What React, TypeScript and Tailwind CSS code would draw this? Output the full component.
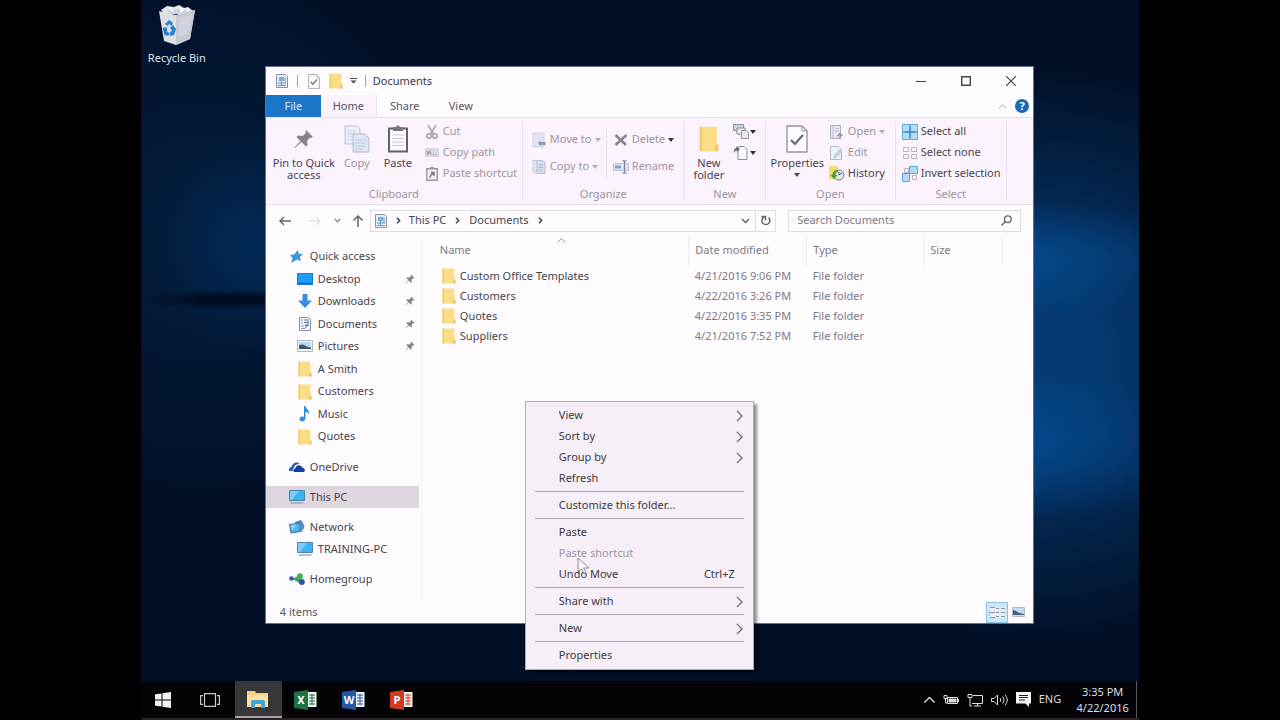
import { useState, type ReactNode } from 'react'
import clsx from 'clsx'

type IconProps = { className?: string }

const FolderIcon = ({ className = 'w-[14px] h-4' }: IconProps) => (
  <svg className={className} viewBox="0 0 14 16" preserveAspectRatio="none" aria-hidden="true">
    <path d="M.5.5h12v10.500l1 1v3.500H.5z" fill="#fbdd88" />
    <path d="M.5.5H2v15H.5z" fill="#f0cb6a" />
    <path d="M11 11.500h2.500v4H11z" fill="#f0ca68" />
  </svg>
)

const DocIcon = ({ className = 'w-[14px] h-4' }: IconProps) => (
  <svg className={className} viewBox="0 0 14 16" fill="none" aria-hidden="true">
    <path d="M1.500 1.500h9l2 2v11h-11z" fill="#f3f6fb" stroke="#8d90a4" />
    <path d="M3 4h2M3 7h2M3 10h3M3 12.500h4" stroke="#8a94b0" />
    <path d="M6 4h5M6 6.500h4M10 5v5M7 9.500h4M8 8v4" stroke="#5b77a6" />
  </svg>
)

const BlueDocIcon = ({ className = 'w-[14px] h-4' }: IconProps) => (
  <svg className={className} viewBox="0 0 14 16" fill="none" aria-hidden="true">
    <path d="M1.500 1.500h9l2 2v11h-11z" fill="#e2edf8" stroke="#8d93a8" />
    <path d="M4 4h5v4H4z" fill="#7cb1e3" />
    <path d="M3 10h8M3 12.500h8M10 4.500v5M6.500 8v4" stroke="#6f93bd" />
  </svg>
)

const CheckDocIcon = ({ className = 'w-3 h-[15px]' }: IconProps) => (
  <svg className={className} viewBox="0 0 22 28" fill="none" aria-hidden="true">
    <path d="M1 1h15l5 5v21H1z" fill="#fdfbfe" stroke="#9a94a0" strokeWidth="1.4" />
    <path d="M16 1v5h5" stroke="#9a94a0" />
    <path d="M5 15l4 4 8-9" stroke="#6c6872" strokeWidth="2.2" />
  </svg>
)

const PinIcon = ({ className = 'w-[10px] h-[10px]' }: IconProps) => (
  <svg className={className} viewBox="0 0 20 20" aria-hidden="true">
    <path d="M12 1l7 7-2 1-1-.5-3 3.500.5 4-1.500 1.500-4.500-4.500L1 19l-.5-.5L6.500 12 2.500 8 4 6.500l4.500.5L12 4l-.5-1z" fill="#85838b" />
  </svg>
)

const StarIcon = () => (
  <svg className="w-[13px] h-[13px]" viewBox="0 0 12 12" aria-hidden="true">
    <path d="M7 0l1.200 3.400 3.800.4-2.800 2.500.7 4.200-3.300-1.700L1 12l1.400-4.700L0 4.500l4.200-.6z" fill="#3d95dc" />
  </svg>
)

const DesktopIcon = () => (
  <svg className="w-4 h-3" viewBox="0 0 16 12" aria-hidden="true">
    <path d="M0 0h16v12H0z" fill="#1a7fd4" />
    <path d="M1 1h14v8.500H1z" fill="#1e9cf5" />
    <path d="M2 10.500h12" stroke="#0d5fa8" />
  </svg>
)

const DownloadIcon = () => (
  <svg className="w-[14px] h-[14px]" viewBox="0 0 14 14" aria-hidden="true">
    <path d="M4.500 0h5v6.500H14L7 14 0 6.500h4.500z" fill="#3c8ddb" />
  </svg>
)

const PicturesIcon = () => (
  <svg className="w-4 h-3" viewBox="0 0 16 12" aria-hidden="true">
    <path d="M.5.5h15v11H.5z" fill="#eef3f8" stroke="#b3b7c2" />
    <path d="M2 2h12v7H2z" fill="#bcd6ec" />
    <path d="M2 5l4-.5 5 2.500 3 .5V9H2z" fill="#46566a" />
  </svg>
)

const MusicIcon = () => (
  <svg className="w-[14px] h-4" viewBox="0 0 14 16" aria-hidden="true">
    <path d="M6 0h1.500c0 3 4.500 4 3.500 8.500-.5-2-2-2.500-3.500-2.800V12c0 4.500-6 4.500-6 1 0-2 2.500-3 4.500-2z" fill="#2f8ddc" />
  </svg>
)

const OneDriveIcon = () => (
  <svg className="w-4 h-[10px]" viewBox="0 0 16 10" aria-hidden="true">
    <path d="M0 9c-.5-3 1.500-4 2.500-4C3 1 8-1 10.500 2 7 1.500 5 4 5 6 4 6 3.500 8 4 9z" fill="#2a5bb0" />
    <path d="M4.800 10C3.500 7 6 6 6.500 6.200 7 2.500 12 2 13 5.500c3 0 3.500 3.500 2 4.500z" fill="#123f95" />
  </svg>
)

const ComputerIcon = () => (
  <svg className="w-4 h-[14px]" viewBox="0 0 16 14" aria-hidden="true">
    <path d="M.5.5h15v10H.5z" fill="#3db2f2" stroke="#4a86b4" />
    <path d="M1 1h9L3 10H1z" fill="#7acdf8" />
    <path d="M1.500 13h13" stroke="#a3a8b8" strokeWidth="1.5" />
  </svg>
)

const NetworkIcon = () => (
  <svg className="w-4 h-[14px]" viewBox="0 0 16 14" aria-hidden="true">
    <path d="M6 2l6-2 3.500 6-3 6-5-1z" fill="#4083b4" />
    <path d="M10 1.500c4 0 5.500 3 5 6s-3 4.500-4 4.500z" fill="#5e93bb" />
    <path d="M.5 4.500L11 3v8.500L2 13z" fill="#4db4ea" stroke="#3879a8" />
    <path d="M1.500 5.200L8 4.300 3 11z" fill="#88d0f5" />
  </svg>
)

const HomegroupIcon = () => (
  <svg className="w-4 h-3" viewBox="0 0 16 12" aria-hidden="true">
    <path d="M3 6l8-4v8z" fill="#3fa060" />
    <circle cx="2.5" cy="5.5" r="2.3" fill="#2f62a8" />
    <circle cx="11" cy="3.2" r="3" fill="#4aae58" />
    <circle cx="12.8" cy="9" r="3" fill="#29579c" />
  </svg>
)

const Caret = ({ className = 'text-[#2f2d33]' }: IconProps) => (
  <svg className={clsx('w-[6px] h-[4px] shrink-0', className)} viewBox="0 0 6 4" aria-hidden="true">
    <path d="M0 0h6L3 4z" fill="currentColor" />
  </svg>
)

const Chevron = ({ className }: IconProps) => (
  <svg className={clsx('shrink-0', className)} viewBox="0 0 8 14" fill="none" aria-hidden="true">
    <path d="M1 1l6 6-6 6" stroke="currentColor" strokeWidth="1.5" />
  </svg>
)

// Bolder and smaller, for the breadcrumb and the history drop-downs
const Angle = ({ className }: IconProps) => (
  <svg className={clsx('w-[5px] h-[7px] shrink-0', className)} viewBox="0 0 5 7" fill="none" aria-hidden="true">
    <path d="M1 .8l2.700 2.700L1 6.200" stroke="currentColor" strokeWidth="1.5" />
  </svg>
)

const CopyIcon = () => (
  <svg className="w-[26px] h-7" viewBox="0 0 26 28" aria-hidden="true">
    <path d="M1 1h12l3 3v15H1z" fill="#e9edf7" stroke="#bcc1d2" />
    <path d="M3 6h9M3 9h9M3 12h9M3 15h6" stroke="#cdd5e6" />
    <path d="M9 9h12l4 4v14H9z" fill="#dde5f3" stroke="#b3bacd" />
    <path d="M11 15h11M11 18h11M11 21h11M11 24h8" stroke="#bccbe2" />
  </svg>
)

const PasteIcon = () => (
  <svg className="w-[22px] h-7" viewBox="0 0 22 28" aria-hidden="true">
    <path d="M2 3.500h18v23H2z" fill="#fbfbff" stroke="#626069" strokeWidth="2" />
    <path d="M6 2h3l2-2 2 2h3v4H6z" fill="#77757e" />
    <path d="M5 10h12M5 13.500h12M5 17h12M5 20.500h12" stroke="#c3cce0" />
  </svg>
)

const CutIcon = () => (
  <svg className="w-3 h-[14px]" viewBox="0 0 12 14" fill="none" stroke="#a29eaa" strokeWidth="1.5" aria-hidden="true">
    <path d="M2 0l5.500 9M10 0L4.500 9" />
    <circle cx="3" cy="11" r="2.2" />
    <circle cx="9" cy="11" r="2.2" />
  </svg>
)

const CopyPathIcon = () => (
  <svg className="w-[14px] h-[10px]" viewBox="0 0 14 10" aria-hidden="true">
    <path d="M0 0h14v9H0z" fill="#d6d8e4" />
    <path d="M1.500 3l1.500 3.500L4.500 3 6 6.500M8 6.500h1M10.500 6.500h1" stroke="#8b8c9e" fill="none" />
  </svg>
)

const PasteShortcutIcon = () => (
  <svg className="w-3 h-[14px]" viewBox="0 0 12 14" fill="none" aria-hidden="true">
    <path d="M.8 1.800h10.400v11.400H.8z" fill="#f4f3fa" stroke="#9694a0" strokeWidth="1.4" />
    <path d="M4 1h4" stroke="#9694a0" strokeWidth="2" />
    <path d="M4 11c0-3 1-4 3.500-4M5 5.500h3v3.500" stroke="#73717e" strokeWidth="1.3" />
  </svg>
)

const MoveToIcon = () => (
  <svg className="w-[14px] h-4" viewBox="0 0 14 16" aria-hidden="true">
    <path d="M1 1h11v14H1z" fill="#dde3f1" stroke="#cfd6e6" />
    <path d="M6 11l2.500-2.500v1.500h5v3h-5v1.500z" fill="#8f9bb6" />
  </svg>
)

const CopyToIcon = () => (
  <svg className="w-[14px] h-4" viewBox="0 0 14 16" aria-hidden="true">
    <path d="M1 1.500h6v12H1z" fill="#e0e4f0" stroke="#c5cbdc" />
    <path d="M5 1.500h6l2 2v11H5z" fill="#d5deee" stroke="#b5bed4" />
    <path d="M7 6h4M7 8.500h4M7 11h3" stroke="#a9b6d0" />
  </svg>
)

const DeleteIcon = () => (
  <svg className="w-[14px] h-3" viewBox="0 0 14 12" fill="none" aria-hidden="true">
    <path d="M1.500 1L12 11M12.500 1L1.500 11" stroke="#87848e" strokeWidth="2.6" />
  </svg>
)

const RenameIcon = () => (
  <svg className="w-4 h-[14px]" viewBox="0 0 16 14" fill="none" aria-hidden="true">
    <path d="M.5 3.500h15v7H.5z" fill="#dfe3ef" stroke="#bdc2d2" />
    <path d="M2 5.500h6v3H2z" fill="#8fa2c6" />
    <path d="M9.500.7c1.500 0 2 .3 2 1.300v10c0 1-.5 1.300-2 1.300M13.500.7c-1.500 0-2 .3-2 1.300M13.500 13.300c-1.500 0-2-.3-2-1.300" stroke="#86848f" strokeWidth="1.2" />
  </svg>
)

const NewItemIcon = () => (
  <svg className="w-4 h-[15px]" viewBox="0 0 16 15" aria-hidden="true">
    <path d="M.6.6h10v6H.6z" fill="#cfd9e6" stroke="#858b96" />
    <path d="M4 4h8v6H4z" fill="#e9edf4" stroke="#858b96" />
    <path d="M8.500 6.500h5l2 2v6h-7z" fill="#e3e8f2" stroke="#93979f" />
  </svg>
)

const EasyAccessIcon = () => (
  <svg className="w-4 h-[15px]" viewBox="0 0 16 15" fill="none" aria-hidden="true">
    <path d="M5 1.500h6l3 3v10H5z" fill="#fbf9fe" stroke="#8f8c96" />
    <path d="M.5 8l1-4 1.500-1V1.500L7 4 4 7V5.500L2.500 6z" fill="#6a6872" />
  </svg>
)

const OpenIcon = () => (
  <svg className="w-[13px] h-[14px]" viewBox="0 0 13 14" fill="none" aria-hidden="true">
    <path d="M.5.5h10v13H.5z" fill="#e6e8f1" stroke="#a9aec0" />
    <path d="M3 1v12M5 3.500h4M5 6h4" stroke="#b6bccd" />
    <path d="M10 14V9M7.500 11l2.500-2.500L12.500 11" stroke="#8f94a8" strokeWidth="1.4" />
  </svg>
)

const EditIcon = () => (
  <svg className="w-[13px] h-[14px]" viewBox="0 0 13 14" aria-hidden="true">
    <path d="M.5.5h8l3 3v10H.5z" fill="#eef1f8" stroke="#b2b8c8" />
    <path d="M3 13l1-4 6-6 2.500 2.500-6 6z" fill="#c3cfe4" />
  </svg>
)

const HistoryIcon = () => (
  <svg className="w-4 h-[15px]" viewBox="0 0 16 15" aria-hidden="true">
    <path d="M0 0h9v13H0z" fill="#f6da6c" />
    <circle cx="10" cy="9" r="5" fill="#e3ebe6" stroke="#71808c" />
    <path d="M10 6v3l3-2" stroke="#4e5a60" fill="none" />
    <path d="M9 4C5 4 3 7 3.500 9H1.500L5 13l3.500-4h-2C6.300 7 7.500 6 9 6z" fill="#3f9d3c" />
  </svg>
)

const SelectAllIcon = () => (
  <svg className="w-4 h-4" viewBox="0 0 16 16" aria-hidden="true">
    <path d="M0 0h16v16H0z" fill="#62b0e6" />
    <path d="M1 1h6v6H1zM9 1h6v6H9zM1 9h6v6H1zM9 9h6v6H9z" fill="#b4dcf6" />
    <path d="M8 3v10M3 8h10" stroke="#3886c2" />
  </svg>
)

const SelectNoneIcon = () => (
  <svg className="w-4 h-4" viewBox="0 0 16 16" aria-hidden="true">
    <path d="M1.500 2.500h5v4h-5zM9.500 2.500h5v4h-5zM1.500 9.500h5v4h-5zM9.500 9.500h5v4h-5z" fill="none" stroke="#b9b4c0" />
  </svg>
)

const InvertIcon = () => (
  <svg className="w-4 h-4" viewBox="0 0 16 16" aria-hidden="true">
    <path d="M2.500 2.500h4v4h-4zM10.500 9.500h4v4h-4z" fill="none" stroke="#b9b4c0" />
    <path d="M7.500.5h8v7h-8zM.5 7.500h7v8h-7z" fill="#b4dbf6" stroke="#5ba3d8" />
  </svg>
)

type RibbonItemProps = {
  icon: ReactNode
  label: string
  disabled?: boolean
  caret?: 'dark' | 'light'
}

const RibbonItem = ({ icon, label, disabled, caret }: RibbonItemProps) => (
  <button
    disabled={disabled}
    className={clsx(
      'flex items-center gap-[3px] h-[21px] whitespace-nowrap',
      disabled ? 'text-[#9a95a0]' : 'text-[#47444c]',
    )}
  >
    <span className="w-4 flex justify-center shrink-0">{icon}</span>
    {label}
    {caret && <Caret className={caret === 'dark' ? 'text-[#2f2d33]' : 'text-[#b3aeb8]'} />}
  </button>
)

const BigButton = ({
  icon,
  label,
  disabled,
  caret,
  className,
}: RibbonItemProps & { className: string }) => (
  <button
    disabled={disabled}
    className={clsx(
      'flex flex-col items-center shrink-0 leading-3 text-center',
      disabled ? 'text-[#9a95a0]' : 'text-[#47444c]',
      className,
    )}
  >
    <span className="h-9 flex items-center">{icon}</span>
    {label}
    {caret && <Caret className="mt-1" />}
  </button>
)

const RibbonGroup = ({
  label,
  className,
  children,
}: {
  label: string
  className: string
  children: ReactNode
}) => (
  <section
    aria-label={label}
    className={clsx('flex flex-col shrink-0 mt-[3px] mb-1 border-r border-[#ebe1ee]', className)}
  >
    <div className="flex h-[68px]">{children}</div>
    <div className="text-center text-[#9a95a0] leading-3">{label}</div>
  </section>
)

const Ribbon = () => (
  <div className="flex h-[88px] bg-[#fbf3fd] border-y border-[#eadfec]">
    <RibbonGroup label="Clipboard" className="w-[257px]">
      <BigButton className="w-[76px] px-1" icon={<PinIcon className="w-5 h-5" />} label="Pin to Quick access" />
      <BigButton className="w-[30px]" icon={<CopyIcon />} label="Copy" disabled />
      <BigButton className="w-[52px]" icon={<PasteIcon />} label="Paste" />
      <div className="flex flex-col">
        <RibbonItem icon={<CutIcon />} label="Cut" disabled />
        <RibbonItem icon={<CopyPathIcon />} label="Copy path" disabled />
        <RibbonItem icon={<PasteShortcutIcon />} label="Paste shortcut" disabled />
      </div>
    </RibbonGroup>
    <RibbonGroup label="Organize" className="w-[162px]">
      <div className="flex pt-2">
        <div className="flex flex-col gap-[6px] pl-2 w-[84px] h-[50px] border-r border-[#ebe1ee]">
          <RibbonItem icon={<MoveToIcon />} label="Move to" disabled caret="light" />
          <RibbonItem icon={<CopyToIcon />} label="Copy to" disabled caret="light" />
        </div>
        <div className="flex flex-col gap-[6px] pl-[6px]">
          <RibbonItem icon={<DeleteIcon />} label="Delete" disabled caret="dark" />
          <RibbonItem icon={<RenameIcon />} label="Rename" disabled />
        </div>
      </div>
    </RibbonGroup>
    <RibbonGroup label="New" className="w-[81px]">
      <BigButton className="w-12 px-1" icon={<FolderIcon className="w-5 h-[26px]" />} label="New folder" />
      <div className="flex flex-col">
        <button aria-label="New item" className="flex items-center gap-px h-[21px]">
          <NewItemIcon />
          <Caret />
        </button>
        <button aria-label="Easy access" className="flex items-center gap-px h-[21px]">
          <EasyAccessIcon />
          <Caret />
        </button>
      </div>
    </RibbonGroup>
    <RibbonGroup label="Open" className="w-[130px]">
      <BigButton className="w-[63px]" icon={<CheckDocIcon className="w-[22px] h-7" />} label="Properties" caret="dark" />
      <div className="flex flex-col">
        <RibbonItem icon={<OpenIcon />} label="Open" disabled caret="light" />
        <RibbonItem icon={<EditIcon />} label="Edit" disabled />
        <RibbonItem icon={<HistoryIcon />} label="History" />
      </div>
    </RibbonGroup>
    <RibbonGroup label="Select" className="w-[111px]">
      <div className="flex flex-col pl-[6px]">
        <RibbonItem icon={<SelectAllIcon />} label="Select all" />
        <RibbonItem icon={<SelectNoneIcon />} label="Select none" />
        <RibbonItem icon={<InvertIcon />} label="Invert selection" />
      </div>
    </RibbonGroup>
  </div>
)

const TitleBar = () => (
  <header className="flex items-center h-7 pl-[9px] text-[#3a383f]">
    <BlueDocIcon />
    <span className="w-px h-3 ml-2 bg-[#a5a1ab]" />
    <button aria-label="Properties" className="ml-[10px]">
      <CheckDocIcon />
    </button>
    <button aria-label="New folder" className="ml-[9px]">
      <FolderIcon />
    </button>
    <button aria-label="Customize toolbar" className="ml-[7px]">
      <svg className="w-[7px] h-[6px]" viewBox="0 0 7 6" aria-hidden="true">
        <path d="M0 0h7v1H0zM.5 2.500h6l-3 3z" fill="#4a484f" />
      </svg>
    </button>
    <span className="w-px h-3 ml-2 bg-[#a5a1ab]" />
    <h1 className="ml-[7px]">Documents</h1>
    <div className="flex ml-auto">
      <button aria-label="Minimize" className="w-[45px] flex justify-center">
        <svg className="w-[10px] h-[10px]" viewBox="0 0 10 10" aria-hidden="true">
          <path d="M0 5.500h10" stroke="#444" />
        </svg>
      </button>
      <button aria-label="Maximize" className="w-[45px] flex justify-center">
        <svg className="w-[10px] h-[10px]" viewBox="0 0 10 10" aria-hidden="true">
          <path d="M.7.7h8.600v8.600H.7z" fill="none" stroke="#444" strokeWidth="1.4" />
        </svg>
      </button>
      <button aria-label="Close" className="w-[45px] flex justify-center">
        <svg className="w-[10px] h-[10px]" viewBox="0 0 10 10" aria-hidden="true">
          <path d="M0 0l10 10M10 0L0 10" stroke="#444" strokeWidth="1.2" />
        </svg>
      </button>
    </div>
  </header>
)

const tabs = ['Home', 'Share', 'View']

const TabBar = () => {
  const [selectedTab, setSelectedTab] = useState('Home')

  return (
    <div className="flex h-[22px] text-[#57545c]">
      <button className="w-[55px] pt-px bg-[#1b75c8] text-[#dcecfa]">File</button>
      {tabs.map((tab) => (
        <button
          key={tab}
          onClick={() => setSelectedTab(tab)}
          className={clsx(
            'w-14 pt-px',
            selectedTab === tab && '-mb-px pb-px bg-[#fbf3fd] border-r border-[#eadfec]',
          )}
        >
          {tab}
        </button>
      ))}
      <div className="flex items-center gap-[10px] ml-auto pr-1">
        <button aria-label="Collapse ribbon">
          <Chevron className="w-[5px] h-[9px] -rotate-90 text-[#a5a1ab]" />
        </button>
        <button
          aria-label="Help"
          className="w-[14px] h-[14px] rounded-full bg-[#1769b8] leading-3 font-bold text-white"
        >
          ?
        </button>
      </div>
    </div>
  )
}

const AddressBar = () => (
  <nav aria-label="Address" className="flex items-center h-[31px] text-[#47444c]">
    <button aria-label="Back" className="ml-[13px]">
      <svg className="w-3 h-[10px]" viewBox="0 0 12 10" fill="none" stroke="#66636b" strokeWidth="1.5">
        <path d="M12 5H1M5 1L1 5l4 4" />
      </svg>
    </button>
    <button aria-label="Forward" className="ml-[18px]" disabled>
      <svg className="w-3 h-[10px]" viewBox="0 0 12 10" fill="none" stroke="#e2dee6" strokeWidth="1.5">
        <path d="M0 5h11M7 1l4 4-4 4" />
      </svg>
    </button>
    <button aria-label="Recent locations" className="ml-[14px]">
      <Angle className="rotate-90 text-[#8d8993]" />
    </button>
    <button aria-label="Up" className="ml-3">
      <svg className="w-3 h-3" viewBox="0 0 12 12" fill="none" stroke="#66636b" strokeWidth="1.5">
        <path d="M6 12V1M1.500 5.500L6 1l4.500 4.500" />
      </svg>
    </button>
    <div className="flex items-center grow h-[22px] ml-[6px] pl-[3px] border border-[#e2dbe5]">
      <BlueDocIcon />
      <Angle className="mx-2" />
      <a href="#this-pc">This PC</a>
      <Angle className="mx-[9px]" />
      <a href="#documents">Documents</a>
      <Angle className="mx-[9px]" />
      <button aria-label="Previous locations" className="ml-auto mr-[5px]">
        <svg className="w-[9px] h-[6px]" viewBox="0 0 9 6" fill="none" stroke="#66636b" strokeWidth="1.5">
          <path d="M1 1l3.500 3.500L8 1" />
        </svg>
      </button>
      <button
        aria-label="Refresh"
        className="flex items-center justify-center w-5 h-5 border-l border-[#e2dbe5]"
      >
        <svg className="w-[10px] h-[11px]" viewBox="0 0 10 11" fill="none" stroke="#66636b" strokeWidth="1.5">
          <path d="M7.500 2.500a4 4 0 1 1-4.500-.5M.5 1.500h4v4" />
        </svg>
      </button>
    </div>
    <label className="flex items-center w-[233px] h-[22px] mx-3 px-2 border border-[#e2dbe5]">
      <input
        type="search"
        aria-label="Search Documents"
        placeholder="Search Documents"
        className="grow min-w-0 bg-transparent outline-none placeholder:text-[#7d7984]"
      />
      <svg className="w-[11px] h-[11px]" viewBox="0 0 11 11" fill="none" stroke="#66636b" strokeWidth="1.4">
        <circle cx="6.8" cy="4.2" r="3.3" />
        <path d="M4.500 6.500L.5 10.500" />
      </svg>
    </label>
  </nav>
)

type NavEntry = { name: string; icon: ReactNode; pinned?: boolean }

const quickAccess: NavEntry[] = [
  { name: 'Desktop', icon: <DesktopIcon />, pinned: true },
  { name: 'Downloads', icon: <DownloadIcon />, pinned: true },
  { name: 'Documents', icon: <DocIcon />, pinned: true },
  { name: 'Pictures', icon: <PicturesIcon />, pinned: true },
  { name: 'A Smith', icon: <FolderIcon /> },
  { name: 'Customers', icon: <FolderIcon /> },
  { name: 'Music', icon: <MusicIcon /> },
  { name: 'Quotes', icon: <FolderIcon /> },
]

const NavItem = ({
  name,
  icon,
  pinned,
  nested,
  selected,
}: NavEntry & { nested?: boolean; selected?: boolean }) => (
  <a
    href="#"
    className={clsx(
      'flex items-center gap-[5px] min-h-[22px] pr-1',
      nested ? 'pl-[31px]' : 'pl-[23px]',
      selected && 'bg-[#ddd6df]',
    )}
  >
    <span className="w-4 flex justify-center shrink-0">{icon}</span>
    {name}
    {pinned && <PinIcon className="w-[10px] h-[10px] ml-auto" />}
  </a>
)

const Sidebar = () => (
  <aside className="flex flex-col gap-2 w-[153px] shrink-0 pt-[9px] text-[#47444c]">
    <div className="grid auto-rows-fr h-[203px]">
      <NavItem name="Quick access" icon={<StarIcon />} />
      {quickAccess.map((entry) => (
        <NavItem key={entry.name} {...entry} nested />
      ))}
    </div>
    <NavItem name="OneDrive" icon={<OneDriveIcon />} />
    <NavItem name="This PC" icon={<ComputerIcon />} selected />
    <div>
      <NavItem name="Network" icon={<NetworkIcon />} />
      <NavItem name="TRAINING-PC" icon={<ComputerIcon />} nested />
    </div>
    <NavItem name="Homegroup" icon={<HomegroupIcon />} />
  </aside>
)

const files = [
  { name: 'Custom Office Templates', modified: '4/21/2016 9:06 PM' },
  { name: 'Customers', modified: '4/22/2016 3:26 PM' },
  { name: 'Quotes', modified: '4/22/2016 3:35 PM' },
  { name: 'Suppliers', modified: '4/21/2016 7:52 PM' },
]

const columns = ['Date modified', 'Type', 'Size']

const FileList = () => (
  <main className="grow relative border-l border-[#f7f2f8] ml-[2px]">
    <Chevron className="absolute left-[137px] top-0 w-[5px] h-[9px] -rotate-90 text-[#8d8993]" />
    <table className="table-fixed w-[581px] text-left text-[#7d7984]">
      <colgroup>
        <col className="w-[267px]" />
        <col className="w-[118px]" />
        <col className="w-[117px]" />
        <col className="w-[79px]" />
      </colgroup>
      <thead>
        <tr className="h-[30px]">
          <th className="font-normal pl-[18px] pb-[2px] border-r border-[#f0eaf2]">Name</th>
          {columns.map((column) => (
            <th key={column} className="font-normal pl-[6px] pb-[2px] border-r border-[#f0eaf2]">
              {column}
            </th>
          ))}
        </tr>
      </thead>
      <tbody>
        {files.map((file) => (
          <tr key={file.name} className="h-5">
            <td className="pl-5">
              <span className="flex items-center gap-1 text-[#47444c]">
                <FolderIcon />
                {file.name}
              </span>
            </td>
            <td className="pl-[6px] whitespace-nowrap">{file.modified}</td>
            <td className="pl-[6px]">File folder</td>
            <td />
          </tr>
        ))}
      </tbody>
    </table>
  </main>
)

const StatusBar = () => (
  <footer className="flex items-center h-[22px] pl-[14px] pr-2 text-[#57545c]">
    4 items
    <button
      aria-label="Details view"
      className="flex items-center justify-center w-[22px] h-[21px] ml-auto bg-[#cfe6f8] border border-[#8fc0e6]"
    >
      <svg className="w-4 h-[11px]" viewBox="0 0 16 11" aria-hidden="true">
        <path d="M0 0h16v11H0z" fill="#e6eff8" />
        <path d="M1 .5h5M1 5.500h5M1 10.500h5M0 3v6M7 1.500h3M12 1.500h4M7 5.500h3M12 5.500h4M7 9.500h3M12 9.500h4" stroke="#8a93a2" />
      </svg>
    </button>
    <button aria-label="Large icons view" className="ml-1">
      <svg className="w-[13px] h-[10px]" viewBox="0 0 13 10" aria-hidden="true">
        <path d="M.5.5h12v9H.5z" fill="#c5dcee" stroke="#b3b8c4" />
        <path d="M1 3l3 1 3 2 5 1v1H1z" fill="#44607e" />
      </svg>
    </button>
  </footer>
)

const menuGroups: { label: string; submenu?: boolean; disabled?: boolean; shortcut?: string }[][] = [
  [
    { label: 'View', submenu: true },
    { label: 'Sort by', submenu: true },
    { label: 'Group by', submenu: true },
    { label: 'Refresh' },
  ],
  [{ label: 'Customize this folder...' }],
  [
    { label: 'Paste' },
    { label: 'Paste shortcut', disabled: true },
    { label: 'Undo Move', shortcut: 'Ctrl+Z' },
  ],
  [{ label: 'Share with', submenu: true }],
  [{ label: 'New', submenu: true }],
  [{ label: 'Properties' }],
]

const ContextMenu = () => (
  <div
    role="menu"
    className="absolute left-[384px] top-[401px] w-[229px] py-[3px] bg-[#f6eff8] border border-[#b0aab3] shadow-[3px_3px_3px_rgba(0,0,0,0.45)] text-[#3a383f]"
  >
    {menuGroups.map((group, i) => (
      <div key={group[0].label}>
        {i > 0 && <hr className="mx-[9px] mt-[2px] mb-[3px] border-[#aaa4ad]" />}
        {group.map((item) => (
          <button
            key={item.label}
            role="menuitem"
            disabled={item.disabled}
            className="flex items-center w-full h-[21px] pl-[33px] pr-[10px] disabled:text-[#9a95a0]"
          >
            {item.label}
            {item.shortcut && <span className="ml-auto pr-2">{item.shortcut}</span>}
            {item.submenu && <Chevron className="w-[7px] h-3 ml-auto text-[#6a676f]" />}
          </button>
        ))}
      </div>
    ))}
  </div>
)

const RecycleBin = () => (
  <a href="#recycle-bin" className="absolute left-0 top-1 flex flex-col items-center w-[72px] gap-1 text-[#dfe4ec] whitespace-nowrap">
    <svg className="w-10 h-[42px]" viewBox="0 0 40 42" aria-hidden="true">
      <path d="M4 6l6-4 7 1 5-2 5 3 4-1 5 4-3 3H8z" fill="#e6e8ee" />
      <path d="M10 7l6-3 3 2 6-3 4 3 5 1-3 3H12z" fill="#cfd2da" />
      <path d="M12 4l5 1-2 3zM22 3l6 2-4 4zM30 5l3 1-3 2z" fill="#fff" />
      <path d="M2 7l17 4 19-5-5 29-14 6L7 37z" fill="#dcdfe6" />
      <path d="M19 11l19-5-5 29-14 6z" fill="#c6c9d2" />
      <path d="M22 14l13-3-3 18-10 4z" fill="#d0d3db" />
      <path d="M8 20l4-4 4 3-1.500 3-2.500-2-1.500 2zM5.500 24l4-1 1 5 2 1-1 3-4-1zM16 21l3 4-2 6-4 1v-4l2-1-1-2-1-1z" fill="#2b82cb" />
    </svg>
    Recycle Bin
  </a>
)

const Cursor = () => (
  <svg className="absolute left-[436px] top-[557px] w-[13px] h-[19px] opacity-80" viewBox="0 0 13 19" aria-hidden="true">
    <path d="M1 1v14l3.500-3.200L7 17l2-1-2.300-5H12z" fill="#fbf7fc" stroke="#77737b" />
  </svg>
)

type OfficeProps = { letter: string; name: string; color: string }

const OfficeIcon = ({ letter, name, color }: OfficeProps) => (
  <button aria-label={name} className="w-12 flex items-center justify-center">
    <svg className="w-[23px] h-5" viewBox="0 0 23 20">
      <path d="M12 2h10.500v15H12z" fill="#f3f3f3" />
      <path d="M15 5h6M15 8h6M15 11h6M15 14h6M18 4v11" stroke={color} />
      <path d="M0 2l14-2v20L0 18z" fill={color} />
      <text x="7" y="14" textAnchor="middle" fontSize="11" fontWeight="700" fill="#fff">
        {letter}
      </text>
    </svg>
  </button>
)

const Taskbar = () => (
  <footer className="flex h-[39px] bg-[#020207] border-b-2 border-[#2b2123] text-[#dedde2]">
    <button aria-label="Start" className="w-11 flex items-center justify-center">
      <svg className="w-4 h-4" viewBox="0 0 16 16" fill="#f1f1f4">
        <path d="M0 2.300L6.500 1.400v6.100H0zM7.500 1.200L16 0v7.500H7.500zM0 8.500h6.500v6.100L0 13.700zM7.500 8.500H16V16l-8.500-1.200z" />
      </svg>
    </button>
    <button aria-label="Task view" className="w-[50px] flex items-center justify-center">
      <svg className="w-5 h-[14px]" viewBox="0 0 20 14" fill="none" stroke="#c9c9ce" strokeWidth="1.2">
        <path d="M4.500.6h11v12.800h-11zM3 2.600H.6v8.800H3M17 2.600h2.400v8.800H17" />
      </svg>
    </button>
    <button
      aria-label="File Explorer"
      className="w-[47px] flex items-center justify-center bg-[#36363b] border-b-2 border-[#a5a3a8]"
    >
      <svg className="w-[22px] h-[18px]" viewBox="0 0 22 18">
        <path d="M0 1h8l1 2h12v14H0z" fill="#f5d27d" />
        <path d="M0 5h21v12H0z" fill="#fbe2a0" />
        <path d="M4 18v-6c0-1.500 1-2 2-2h10c1 0 2 .5 2 2v6h-4v-4H8v4z" fill="#3ba6da" />
      </svg>
    </button>
    <OfficeIcon letter="X" name="Excel" color="#1e7145" />
    <OfficeIcon letter="W" name="Word" color="#2457a4" />
    <OfficeIcon letter="P" name="PowerPoint" color="#cf3a20" />
    <div className="flex items-center gap-2 ml-auto">
      <button aria-label="Show hidden icons">
        <Chevron className="w-[7px] h-3 mx-[2px] -rotate-90" />
      </button>
      <svg className="w-4 h-[10px]" viewBox="0 0 16 10" fill="none" stroke="#dedde2" aria-hidden="true">
        <path d="M4.500 2.500h10v6h-10zM15.500 4v3" />
        <path d="M6 4h7v3H6z" fill="#dedde2" />
        <path d="M1 .5h3v3H1zM2.500 4v4h2" />
      </svg>
      <svg className="w-4 h-[14px]" viewBox="0 0 16 14" fill="none" stroke="#dedde2" aria-hidden="true">
        <path d="M6 2.500h9.500v8H5M7 13h7M10.500 11v2" />
        <path d="M1 1.500h4v3H1zM3 5v8h2" />
      </svg>
      <svg className="w-[17px] h-3" viewBox="0 0 17 12" fill="none" stroke="#dedde2" aria-hidden="true">
        <path d="M.5 4.500h2.500L6.500 1v10L3 7.500H.5zM9 4c1 1 1 3 0 4M11.500 2.500c2 2 2 5 0 7M14 1c3 3 3 7 0 10" />
      </svg>
      <svg className="w-[15px] h-[15px]" viewBox="0 0 15 15" aria-hidden="true">
        <path d="M0 0h15v11.500h-2V15l-3.500-3.500H0z" fill="#f4f4f6" />
        <path d="M3 3.500h9M3 5.500h9M3 8h6" stroke="#1b1b20" />
      </svg>
      <span>ENG</span>
    </div>
    <div className="flex flex-col justify-center items-center w-[67px] ml-2 text-center leading-4">
      <time>3:35 PM</time>
      <time>4/22/2016</time>
    </div>
    <span className="w-px mr-[2px] bg-[#55555b]" />
  </footer>
)

const ExplorerWindow = () => (
  <section
    aria-label="Documents"
    className="absolute left-[124px] right-[105px] top-[66px] bottom-[57px] flex flex-col bg-[#fefcff] border border-[#66708c]"
  >
    <TitleBar />
    <TabBar />
    <Ribbon />
    <AddressBar />
    <div className="flex grow min-h-0">
      <Sidebar />
      <FileList />
    </div>
    <StatusBar />
  </section>
)

export default function App() {
  return (
    <div className="min-h-screen flex bg-black font-['Noto_Sans','Open_Sans',sans-serif] text-[11px]">
      <div className="flex flex-col w-[78%] mx-auto">
        <div className="relative grow overflow-hidden bg-[#020f26] bg-[radial-gradient(ellipse_90px_10px_at_9%_44%,#010a20_30%,transparent_100%),radial-gradient(ellipse_210px_60px_at_86%_38%,#064a8e_0%,transparent_100%),radial-gradient(ellipse_210px_80px_at_86%_65%,#05498f_0%,transparent_100%),radial-gradient(ellipse_300px_290px_at_90%_52%,#043a70_20%,transparent_100%),radial-gradient(ellipse_90px_110px_at_11%_36%,#022a56_0%,transparent_100%),radial-gradient(ellipse_260px_280px_at_6%_34%,#021e3f_0%,transparent_100%)]">
          <RecycleBin />
          <ExplorerWindow />
          <ContextMenu />
          <Cursor />
        </div>
        <Taskbar />
      </div>
    </div>
  )
}
